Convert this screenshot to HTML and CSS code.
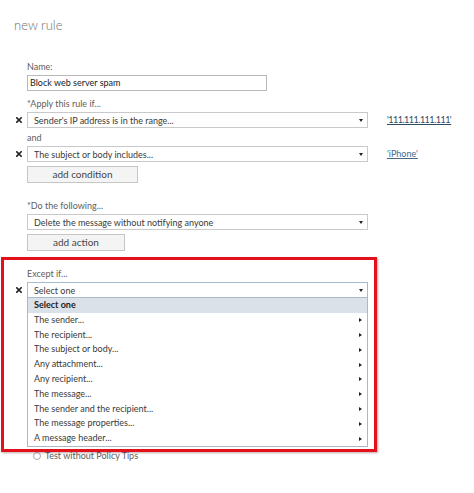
FILE: index.html
```html
<!DOCTYPE html>
<html>
<head>
<meta charset="utf-8">
<link rel="stylesheet" href="styles.css">
</head>
<body>
<div class="page">
  <h1 class="title">new rule</h1>
  <div class="form">
    <div class="label first">Name:</div>
    <div class="textbox">Block web server spam</div>

    <div class="label">*Apply this rule if...</div>
    <div class="row">
      <span class="remove"><svg width="6" height="6" viewBox="0 0 6 6"><path d="M0.8 0.8L5.2 5.2M5.2 0.8L0.8 5.2" stroke="#222" stroke-width="1.6" stroke-linecap="square"/></svg></span>
      <div class="select"><span>Sender's IP address is in the range...</span><span class="caret"></span></div>
      <a class="link dark">'111.111.111.111'</a>
    </div>

    <div class="label tight">and</div>
    <div class="row">
      <span class="remove"><svg width="6" height="6" viewBox="0 0 6 6"><path d="M0.8 0.8L5.2 5.2M5.2 0.8L0.8 5.2" stroke="#222" stroke-width="1.6" stroke-linecap="square"/></svg></span>
      <div class="select"><span>The subject or body includes...</span><span class="caret"></span></div>
      <a class="link light">'iPhone'</a>
    </div>
    <div class="button wide">add condition</div>

    <div class="label section">*Do the following...</div>
    <div class="row">
      <span class="remove"></span>
      <div class="select"><span>Delete the message without notifying anyone</span><span class="caret"></span></div>
    </div>
    <div class="button narrow">add action</div>

    <div class="label section">Except if...</div>
    <div class="row">
      <span class="remove"><svg width="6" height="6" viewBox="0 0 6 6"><path d="M0.8 0.8L5.2 5.2M5.2 0.8L0.8 5.2" stroke="#222" stroke-width="1.6" stroke-linecap="square"/></svg></span>
      <div class="dropdown">
        <div class="select focused"><span>Select one</span><span class="caret"></span></div>
        <ul class="menu">
          <li class="selected">Select one</li>
          <li>The sender...<span class="sub"></span></li>
          <li>The recipient...<span class="sub"></span></li>
          <li>The subject or body...<span class="sub"></span></li>
          <li>Any attachment...<span class="sub"></span></li>
          <li>Any recipient...<span class="sub"></span></li>
          <li>The message...<span class="sub"></span></li>
          <li>The sender and the recipient...<span class="sub"></span></li>
          <li>The message properties...<span class="sub"></span></li>
          <li>A message header...<span class="sub"></span></li>
        </ul>
      </div>
    </div>

    <div class="radio-row"><span class="radio"></span><span>Test without Policy Tips</span></div>
  </div>
  <div class="highlight"></div>
</div>
</body>
</html>
```

FILE: styles.css
```css
html, body {
  margin: 0;
  padding: 0;
  background: #fff;
}
body {
  font-family: Lato, "Open Sans", sans-serif;
  font-size: 9px;
  color: #3a3a3a;
}
.page {
  position: relative;
  width: 474px;
  height: 493px;
  overflow: hidden;
}
.title {
  margin: 0;
  padding: 17px 0 0 14px;
  font-size: 13px;
  line-height: 16px;
  font-weight: 300;
  color: #707070;
}
.form {
  padding-left: 27px;
}
.label {
  line-height: 12px;
  height: 12px;
  color: #5e5e5e;
  margin-top: 7px;
  margin-bottom: 2px;
}
.label.first {
  margin-top: 28px;
}
.label.tight {
  margin-top: 4px;
}
.label.section {
  margin-top: 17px;
}
.textbox {
  box-sizing: border-box;
  width: 240px;
  height: 16px;
  border: 1px solid #b9b9b9;
  padding-left: 2px;
  line-height: 14px;
  color: #222;
}
.row {
  display: flex;
  align-items: flex-start;
  margin-left: -27px;
}
.remove {
  width: 27px;
  height: 16px;
  display: flex;
  align-items: center;
  padding-left: 16px;
  box-sizing: border-box;
}
.select {
  box-sizing: border-box;
  width: 341px;
  height: 16px;
  border: 1px solid #c9c9c9;
  background: #fff;
  display: flex;
  align-items: center;
  justify-content: space-between;
  padding: 0 4px 0 6px;
  color: #3a3a3a;
}
.select.focused {
  border-color: #a7b9cc;
}
.caret {
  width: 0;
  height: 0;
  border-left: 2.5px solid transparent;
  border-right: 2.5px solid transparent;
  border-top: 3px solid #222;
}
.link {
  margin-left: 19px;
  line-height: 16px;
  text-decoration: underline;
}
.link.dark {
  color: #2f4a63;
  letter-spacing: -0.5px;
}
.link.light {
  color: #46698a;
}
.button {
  box-sizing: border-box;
  height: 17px;
  margin-top: 4px;
  border: 1px solid #c6c6c6;
  background: #f4f4f4;
  color: #444;
  font-size: 10px;
  line-height: 15px;
  text-align: center;
}
.button.wide {
  width: 111px;
}
.button.narrow {
  width: 98px;
}
.dropdown {
  width: 341px;
}
.menu {
  list-style: none;
  margin: 0;
  padding: 0;
  box-sizing: border-box;
  width: 341px;
  border: 1px solid #a7b9cc;
  border-top: none;
  background: #fff;
}
.menu li {
  height: 14.8px;
  line-height: 14.8px;
  padding: 0 5px 0 6px;
  display: flex;
  align-items: center;
  justify-content: space-between;
  color: #3a3a3a;
}
.menu li.selected {
  background: #dbe1e8;
  color: #222;
  font-weight: 700;
}
.sub {
  width: 0;
  height: 0;
  border-top: 2.5px solid transparent;
  border-bottom: 2.5px solid transparent;
  border-left: 3px solid #222;
}
.radio-row {
  display: flex;
  align-items: center;
  margin-top: 3px;
  padding-left: 6px;
  line-height: 12px;
  color: #5e5e5e;
}
.radio {
  box-sizing: border-box;
  width: 8px;
  height: 8px;
  border: 1px solid #aaa;
  border-radius: 50%;
  margin-right: 4px;
}
.highlight {
  position: absolute;
  left: 1px;
  top: 257px;
  width: 376px;
  height: 195px;
  box-sizing: border-box;
  border: 3px solid #e3111c;
  box-shadow: 1px 1px 2px rgba(80, 0, 0, 0.35);
  pointer-events: none;
}
```
